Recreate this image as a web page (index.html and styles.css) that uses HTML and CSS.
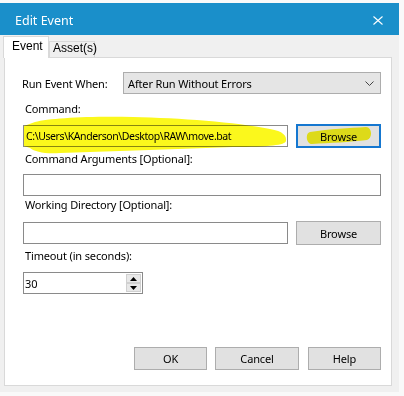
FILE: index.html
```html
<!DOCTYPE html>
<html>

<head>
    <meta name='viewport' content='width=device-width, initial-scale=1'>
    <title>Edit Event</title>
    <link rel="stylesheet" href="styles.css">
</head>

<body>
    <div class='window'>
        <div class='titlebar'>
            <span class='title'>Edit Event</span>
            <svg class='close' width='10' height='9' viewBox='0 0 10 9'>
                <path d='M0.5,0.5 L9.5,8.5 M9.5,0.5 L0.5,8.5' stroke='#fff' stroke-width='1.1' fill='none' />
            </svg>
        </div>
        <div class='client'>
            <div class='tabs'>
                <div class='tab active'>Event</div>
                <div class='tab'>Asset(s)</div>
            </div>
            <div class='page'>
                <div class='row-when'>
                    <span class='when-label'>Run Event When:</span>
                    <div class='select'>
                        <span>After Run Without Errors</span>
                        <svg width='9' height='5' viewBox='0 0 9 5'>
                            <path d='M0.5,0.5 L4.5,4.5 L8.5,0.5' stroke='#444' stroke-width='1' fill='none' />
                        </svg>
                    </div>
                </div>

                <div class='label l-cmd'>Command:</div>
                <div class='row r-cmd'>
                    <div class='field short'>C:\Users\KAnderson\Desktop\RAW\move.bat</div>
                    <div class='btn browse default'>Browse</div>
                </div>

                <div class='label l-args'>Command Arguments [Optional]:</div>
                <div class='field wide'></div>

                <div class='label l-wd'>Working Directory [Optional]:</div>
                <div class='row r-wd'>
                    <div class='field short'></div>
                    <div class='btn browse'>Browse</div>
                </div>

                <div class='label l-time'>Timeout (in seconds):</div>
                <div class='spin'>
                    <span class='spin-val'>30</span>
                    <div class='spin-btns'>
                        <div class='spin-btn'>
                            <svg width='7' height='4' viewBox='0 0 7 4'><path d='M3.5,0 L7,4 L0,4 Z' fill='#000' /></svg>
                        </div>
                        <div class='spin-btn'>
                            <svg width='7' height='4' viewBox='0 0 7 4'><path d='M0,0 L7,0 L3.5,4 Z' fill='#000' /></svg>
                        </div>
                    </div>
                </div>

                <div class='actions'>
                    <div class='btn ok'>OK</div>
                    <div class='btn cancel'>Cancel</div>
                    <div class='btn help'>Help</div>
                </div>
            </div>
        </div>
    </div>

    <!-- highlighter marks drawn over the screenshot -->
    <svg class='marker' width='404' height='396' viewBox='0 0 404 396'>
        <path d='M24,126 L35,122 C50,118 90,116 133,117 C180,118 235,122 270,129 C283,131 287,136 286,141 C285,145 270,147 233,147 C180,149 120,151 60,153 C45,154 35,152 30,148 L24,146 Z' fill='#fbf81c' />
        <path d='M310,132 C330,129 350,128 366,127 C372,127 373,138 367,140 C350,142 330,143 312,144 C306,144 305,133 310,132 Z' fill='#fbf81c' />
    </svg>
</body>

</html>
```

FILE: styles.css
```css
body {
    margin: 0;
    background: #f9f9f9;
    font-family: "Noto Sans", sans-serif;
    font-size: 11px;
    letter-spacing: -0.15px;
    color: #000;
}

.window {
    width: 399px;
    height: 389px;
    margin-top: 3px;
    background: #f0f0f0;
    display: flex;
    flex-direction: column;
}

.titlebar {
    height: 32px;
    background: #1a8fca;
    color: #fff;
    display: flex;
    justify-content: space-between;
    align-items: flex-start;
    padding: 0 16px 0 15px;
}

.title {
    font-size: 12.5px;
    line-height: 18px;
    margin-top: 9px;
    letter-spacing: 0;
}

.close {
    margin-top: 13px;
}

.client {
    flex: 1;
    display: flex;
    flex-direction: column;
    padding: 0 7px 6px 4px;
}

.tabs {
    height: 22px;
    display: flex;
    align-items: flex-end;
    font-family: "Liberation Sans", Arial, sans-serif;
    font-size: 12px;
    letter-spacing: 0;
}

.tab {
    box-sizing: border-box;
    width: 46px;
    height: 16px;
    line-height: 13px;
    padding-left: 3px;
    background: #efefef;
    border: 1px solid #d9d9d9;
    border-bottom: none;
}

.tab.active {
    height: 22px;
    margin-left: -1px;
    margin-bottom: -1px;
    padding: 2px 0 0 8px;
    line-height: 14px;
    background: #fff;
    position: relative;
}

.page {
    box-sizing: border-box;
    height: 329px;
    background: #fff;
    border: 1px solid #d9d9d9;
    padding: 14px 10px 15px 18px;
    display: flex;
    flex-direction: column;
}

.row-when {
    height: 22px;
    display: flex;
    align-items: center;
}

.when-label {
    width: 101px;
    margin-left: -1px;
}

.select {
    flex: 1;
    box-sizing: border-box;
    height: 22px;
    background: #e5e5e5;
    border: 1px solid #adadad;
    display: flex;
    align-items: center;
    justify-content: space-between;
    padding: 0 6px 0 4px;
}

.label {
    height: 16px;
    line-height: 16px;
    padding-left: 2px;
}

.l-cmd { margin-top: 7px; }
.l-args { margin-top: 3px; }
.l-wd { margin-top: 1px; }
.l-time { margin-top: 3px; }

.row {
    height: 24px;
    display: flex;
    align-items: center;
    gap: 8px;
}

.r-cmd { margin-top: 7px; }
.r-wd { margin-top: 8px; }

.field {
    box-sizing: border-box;
    height: 22px;
    line-height: 20px;
    border: 1px solid #8a8a8a;
    background: #fff;
    padding-left: 2px;
    font-size: 10.5px;
    letter-spacing: -0.4px;
    white-space: nowrap;
    overflow: hidden;
}

.field.short {
    width: 265px;
}

.field.wide {
    margin-top: 7px;
}

.btn {
    box-sizing: border-box;
    height: 23px;
    background: #e1e1e1;
    border: 1px solid #adadad;
    display: flex;
    align-items: center;
    justify-content: center;
}

.btn.browse {
    width: 85px;
    height: 24px;
}

.btn.default {
    border: 2px solid #1577d0;
}

.spin {
    box-sizing: border-box;
    width: 120px;
    height: 22px;
    margin-top: 8px;
    border: 1px solid #8a8a8a;
    display: flex;
    justify-content: space-between;
    align-items: center;
    padding: 0 1px 0 1px;
}

.spin-btns {
    display: flex;
    flex-direction: column;
    width: 15px;
}

.spin-btn {
    height: 9px;
    background: #e8e8e8;
    border: 1px solid #d0d0d0;
    box-sizing: border-box;
    display: flex;
    align-items: center;
    justify-content: center;
}

.actions {
    margin-top: auto;
    display: flex;
    justify-content: flex-end;
    gap: 8px;
}

.btn.ok,
.btn.help {
    width: 73px;
}

.btn.cancel {
    width: 84px;
    margin-right: 1px;
}

.marker {
    position: absolute;
    left: 0;
    top: 0;
    pointer-events: none;
    mix-blend-mode: multiply;
}
```
